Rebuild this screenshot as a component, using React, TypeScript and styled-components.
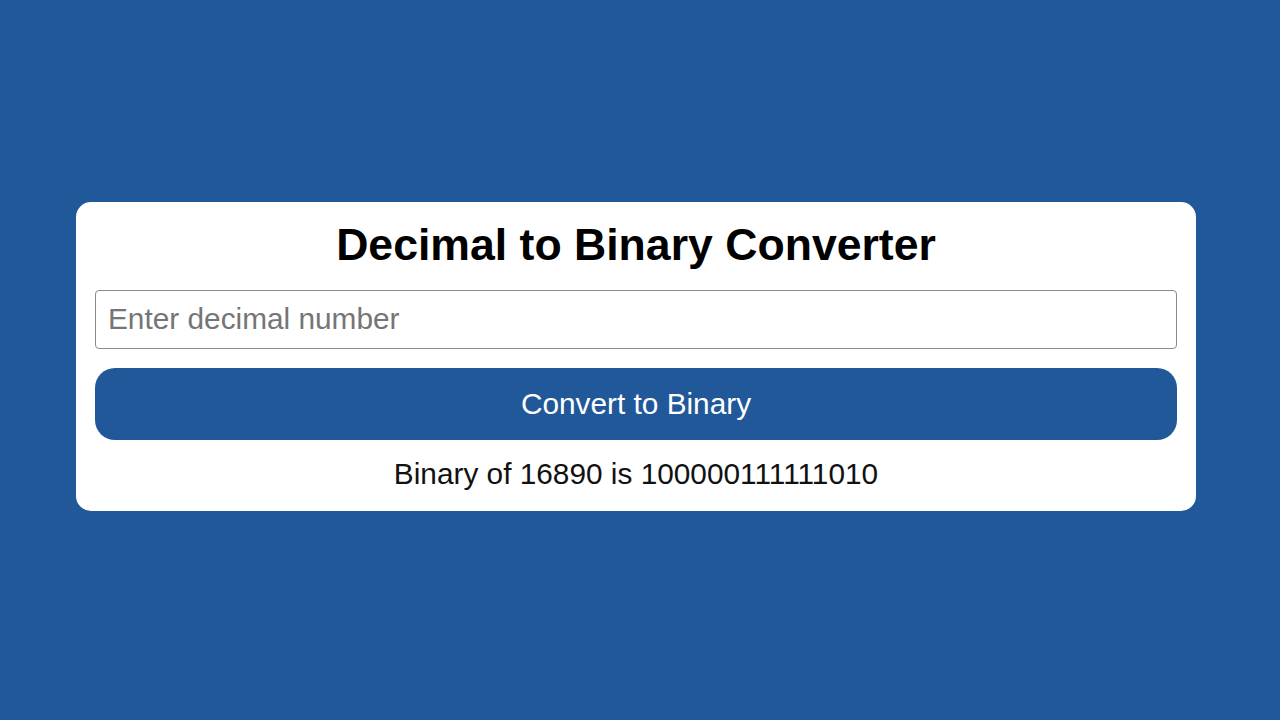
import React, { useState } from 'react'
import styled, { createGlobalStyle } from 'styled-components'

const GlobalStyle = createGlobalStyle`
  * { box-sizing: border-box; }
  html, body {
    margin: 0;
    padding: 0;
    background: #21589a;
    font-family: "Liberation Sans", Arial, sans-serif;
  }
`

const Page = styled.main`
  min-height: 720px;
  display: flex;
  align-items: center;
  justify-content: center;
  padding: 0 8px 8px 0;
`

const Card = styled.section`
  width: 1120px;
  background: #fff;
  border-radius: 15px;
  padding: 20px 19px 20px;
  display: flex;
  flex-direction: column;
  align-items: stretch;
  text-align: center;
`

const Title = styled.h1`
  margin: 0 0 22px;
  font-size: 44.6px;
  line-height: 46px;
  font-weight: 700;
  color: #000;
`

const Input = styled.input`
  height: 59px;
  width: 100%;
  border: 1px solid #8c8c8c;
  border-radius: 4px;
  padding: 0 12px;
  font-family: inherit;
  font-size: 29.8px;
  color: #000;
  outline: none;
  margin-bottom: 19px;

  &::placeholder {
    color: #757575;
  }
`

const Button = styled.button`
  height: 72px;
  width: 100%;
  border: none;
  border-radius: 20px;
  background: #21589a;
  color: #fff;
  font-family: inherit;
  font-size: 29.8px;
  cursor: pointer;
  margin-bottom: 17px;
`

const Result = styled.p`
  margin: 0;
  font-size: 29.8px;
  line-height: 34px;
  color: #111;
`

const App = () => {
  const [value, setValue] = useState('')
  const [result, setResult] = useState('Binary of 16890 is 100000111111010')

  const convert = () => {
    const n = parseInt(value, 10)
    if (Number.isNaN(n)) return
    setResult(`Binary of ${n} is ${n.toString(2)}`)
  }

  return (
    <>
      <GlobalStyle />
      <Page>
        <Card>
          <Title>Decimal to Binary Converter</Title>
          <Input
            type="text"
            placeholder="Enter decimal number"
            value={value}
            onChange={(e) => setValue(e.target.value)}
          />
          <Button onClick={convert}>Convert to Binary</Button>
          <Result>{result}</Result>
        </Card>
      </Page>
    </>
  )
}

export default App
